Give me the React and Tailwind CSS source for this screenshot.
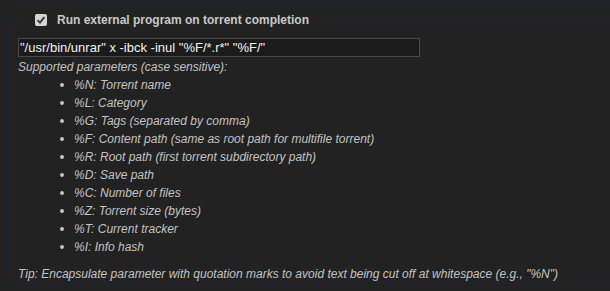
import React from "react";

const params = [
  "%N: Torrent name",
  "%L: Category",
  "%G: Tags (separated by comma)",
  "%F: Content path (same as root path for multifile torrent)",
  "%R: Root path (first torrent subdirectory path)",
  "%D: Save path",
  "%C: Number of files",
  "%Z: Torrent size (bytes)",
  "%T: Current tracker",
  "%I: Info hash",
];

export default function App() {
  return (
    <div
      className="relative w-[610px] h-[291px] overflow-hidden bg-[#222222] text-[#cfcfcf]"
      style={{ fontFamily: '"Liberation Sans", Arial, sans-serif' }}
    >
      {/* previous fieldset bottom edge */}
      <div className="absolute left-[8px] top-[-4px] right-[-4px] h-[6px] border-l border-b border-[#1d2535] rounded-bl-[3px]" />
      <div className="absolute left-[80px] top-[5px] right-0 h-px bg-[#1c2433]" />

      <fieldset className="absolute left-[8px] top-[11px] right-[-4px] bottom-[7px] border border-[#1d2535] rounded-[3px] pl-[9px] pr-0 m-0">
        <legend className="flex items-center ml-[9px] pl-[8px] pr-[6px] h-[18px]">
          <span className="w-[12px] h-[12px] rounded-[2px] bg-[#d4d4d4] flex items-center justify-center mr-[10px]">
            <svg width="10" height="10" viewBox="0 0 10 10">
              <path d="M1.6 5.2 L4 7.6 L8.4 2.2" fill="none" stroke="#3a3a3a" strokeWidth="2" />
            </svg>
          </span>
          <span className="font-bold text-[12px] text-[#c9c9c9]">Run external program on torrent completion</span>
        </legend>

        <div className="mt-[9px] w-[402px] h-[19px] border border-[#484848] bg-[#1b1b1b] flex items-center pl-[1px] text-[13px] text-[#f2f2f2] whitespace-nowrap leading-none">
          "/usr/bin/unrar" x -ibck -inul "%F/*.r*" "%F/"
        </div>

        <div className="italic text-[12px] text-[#c2c2c2] mt-[1px] leading-[18px]">
          Supported parameters (case sensitive):
        </div>
        <ul className="italic text-[12px] text-[#c2c2c2] leading-[18px] pl-[42px] m-0">
          {params.map((p) => (
            <li key={p} className="flex items-center">
              <span className="w-[4px] h-[4px] rounded-full bg-[#c2c2c2] mr-[10px]" />
              {p}
            </li>
          ))}
        </ul>
        <div className="italic text-[12px] text-[#c2c2c2] leading-[18px] mt-[9px] whitespace-nowrap">
          Tip: Encapsulate parameter with quotation marks to avoid text being cut off at whitespace (e.g., "%N")
        </div>
      </fieldset>
    </div>
  );
}
